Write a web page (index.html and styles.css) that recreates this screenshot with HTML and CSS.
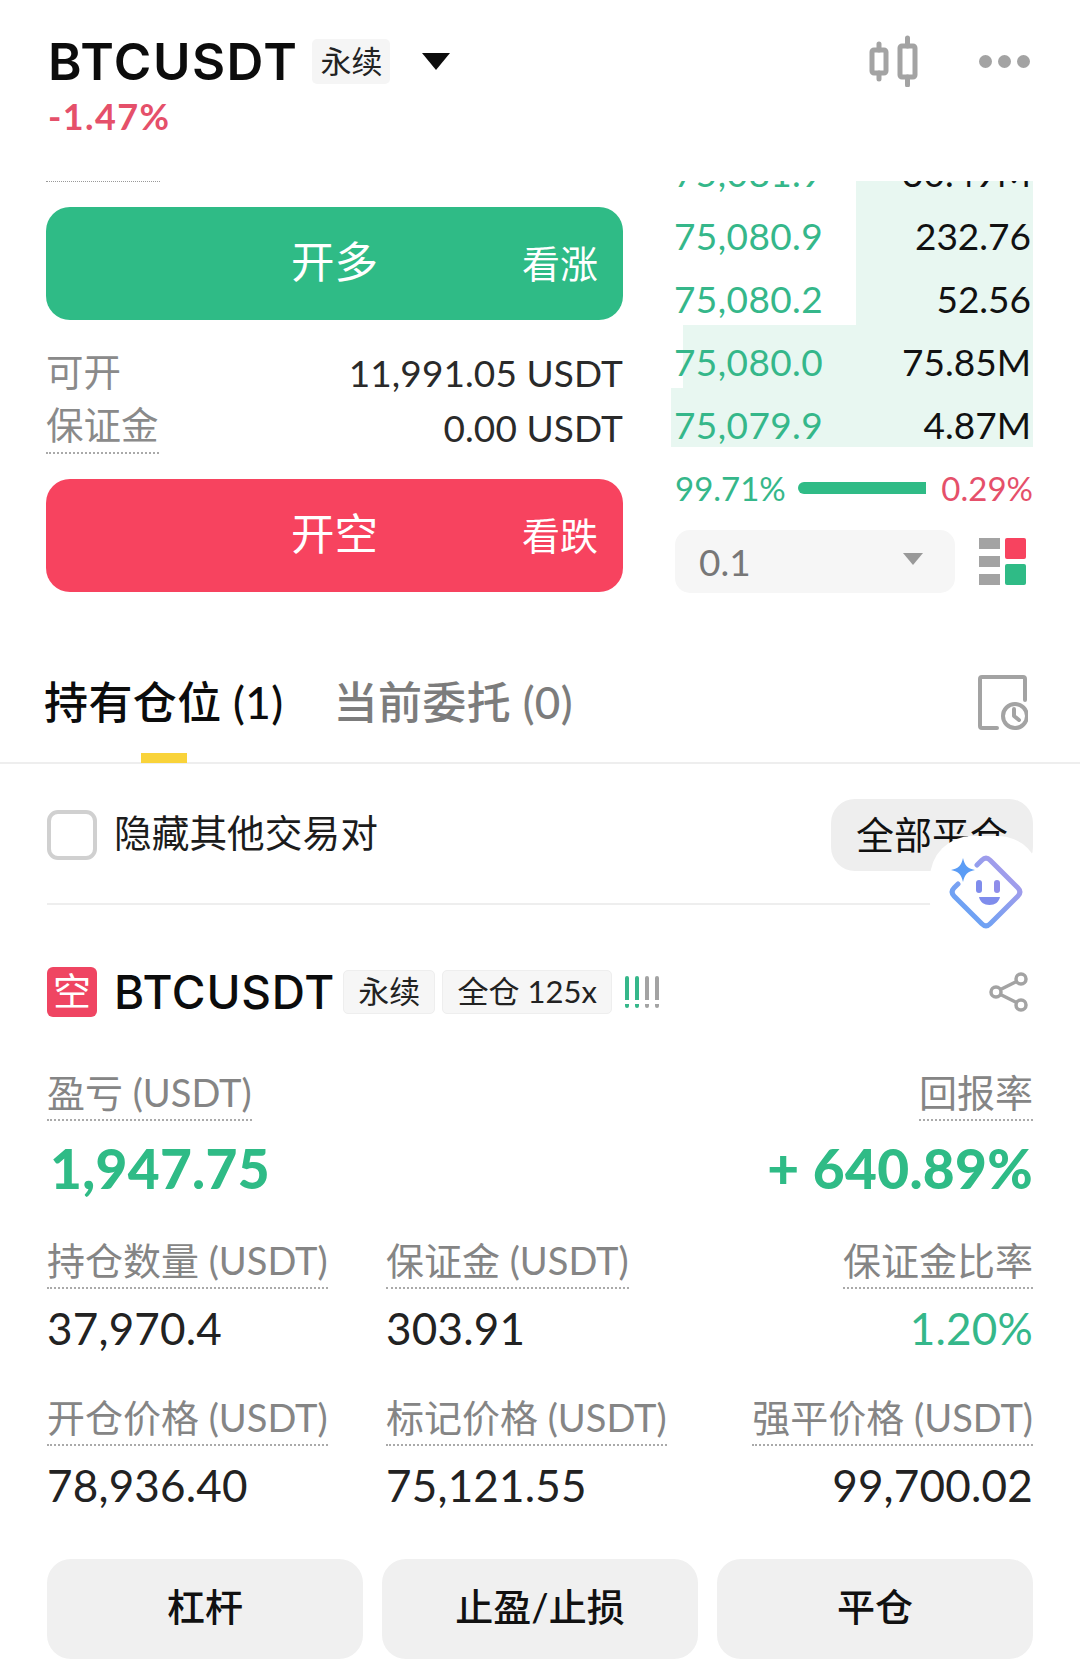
FILE: index.html
```html
<!DOCTYPE html>
<html lang="zh-CN">
<head>
    <meta charset="UTF-8">
    <meta name="viewport" content="width=device-width, initial-scale=1.0">
    <title>BTCUSDT</title>
    <link rel="stylesheet" href="styles.css">
</head>
<body>
    <header class="topbar">
        <div class="topbar-row">
            <h1 class="symbol">BTCUSDT</h1>
            <span class="tag-perp">永续</span>
            <span class="caret"></span>
            <svg class="icon-candles" viewBox="0 0 50 52" fill="none" stroke="#a3a3a3" stroke-width="5" stroke-linecap="round">
                <rect x="3" y="15" width="14" height="23" rx="2"/>
                <path d="M10 9v6M10 38v6"/>
                <rect x="31" y="11" width="15" height="31" rx="2"/>
                <path d="M38.500 3v8M38.500 42v8"/>
            </svg>
            <div class="dots"><i></i><i></i><i></i></div>
        </div>
        <div class="change">-1.47%</div>
    </header>

    <section class="trade">
        <div class="trade-form">
            <div class="dotted-stub"></div>
            <button class="big-btn long"><span class="big-main">开多</span><span class="big-side">看涨</span></button>
            <div class="balance balance-first"><span class="balance-label">可开</span><span class="balance-value">11,991.05 USDT</span></div>
            <div class="balance"><span class="balance-label dashed">保证金</span><span class="balance-value balance-value-low">0.00 USDT</span></div>
            <button class="big-btn short"><span class="big-main">开空</span><span class="big-side">看跌</span></button>
        </div>
        <div class="book">
            <div class="book-rows">
                <div class="book-row"><span class="depth" style="width:177px"></span><span class="price">75,081.9</span><span class="qty">30.49M</span></div>
                <div class="book-row"><span class="depth" style="width:177px"></span><span class="price">75,080.9</span><span class="qty">232.76</span></div>
                <div class="book-row"><span class="depth" style="width:177px"></span><span class="price">75,080.2</span><span class="qty">52.56</span></div>
                <div class="book-row"><span class="depth" style="width:350px"></span><span class="price">75,080.0</span><span class="qty">75.85M</span></div>
                <div class="book-row"><span class="depth" style="width:362px"></span><span class="price">75,079.9</span><span class="qty">4.87M</span></div>
            </div>
            <div class="ratio">
                <span class="ratio-buy">99.71%</span>
                <span class="ratio-bar"></span>
                <span class="ratio-sell">0.29%</span>
            </div>
            <div class="book-tools">
                <div class="step-select"><span>0.1</span><span class="step-caret"></span></div>
                <div class="layout-icon">
                    <div class="layout-bars"><i></i><i></i><i></i></div>
                    <div class="layout-squares"><i class="sq-red"></i><i class="sq-green"></i></div>
                </div>
            </div>
        </div>
    </section>

    <nav class="tabs">
        <a class="tab active">持有仓位 (1)</a>
        <a class="tab">当前委托 (0)</a>
        <svg class="icon-history" viewBox="0 0 50 56" fill="none" stroke="#a3a3a3" stroke-width="4" stroke-linecap="round" stroke-linejoin="round">
            <path d="M19 53H4a2 2 0 0 1-2-2V4a2 2 0 0 1 2-2h41a2 2 0 0 1 2 2v21"/>
            <circle cx="37" cy="41" r="12"/>
            <path d="M36 34v7l5 4"/>
        </svg>
    </nav>

    <div class="filter">
        <div class="filter-inner">
            <span class="checkbox"></span>
            <span class="filter-text">隐藏其他交易对</span>
            <button class="close-all">全部平仓</button>
        </div>
        <div class="assistant">
            <svg viewBox="0 0 76 76" fill="none">
                <defs>
                    <linearGradient id="ai" x1="0" y1="1" x2="1" y2="0">
                        <stop offset="0" stop-color="#5aa4f7"/>
                        <stop offset="1" stop-color="#b49ae8"/>
                    </linearGradient>
                </defs>
                <path d="M29 12L33.800 7.200Q38 3 42.200 7.200L69.800 34.800Q74 39 69.800 43.200L42.200 70.800Q38 75 33.800 70.800L6.200 43.200Q2 39 6.200 34.800L10 31" stroke="url(#ai)" stroke-width="5" stroke-linecap="round"/>
                <path d="M15 5c2 8 4 10 12 12-8 2-10 4-12 12-2-8-4-10-12-12 8-2 10-4 12-12z" fill="#5a9cf5"/>
                <rect x="28" y="27" width="6" height="13" rx="3" fill="#7f8cec"/>
                <rect x="46" y="27" width="6" height="13" rx="3" fill="#8f8dea"/>
                <path d="M31 44h21c-1 5-5 8-10.500 8S32 49 31 44z" fill="#7f8cec"/>
            </svg>
        </div>
    </div>

    <section class="position">
        <div class="pos-title">
            <span class="side-badge">空</span>
            <span class="pos-symbol">BTCUSDT</span>
            <span class="pos-tag">永续</span>
            <span class="pos-tag pos-tag-wide">全仓 125x</span>
            <div class="risk"><i class="on"></i><i class="on"></i><i></i><i></i></div>
            <svg class="icon-share" viewBox="0 0 40 40" fill="none" stroke="#a3a3a3" stroke-width="3.500">
                <circle cx="7" cy="20" r="5"/>
                <circle cx="32" cy="7" r="5"/>
                <circle cx="32" cy="33" r="5"/>
                <path d="M11.500 17.500 27.500 9.500M11.500 22.500l16 8"/>
            </svg>
        </div>

        <div class="pnl-row">
            <div class="metric">
                <span class="metric-label">盈亏 (USDT)</span>
                <div class="pnl-value">1,947.75</div>
            </div>
            <div class="metric metric-end">
                <span class="metric-label">回报率</span>
                <div class="pnl-value">+ 640.89%</div>
            </div>
        </div>

        <div class="metric-grid">
            <div class="metric">
                <span class="metric-label">持仓数量 (USDT)</span>
                <div class="metric-value">37,970.4</div>
            </div>
            <div class="metric">
                <span class="metric-label">保证金 (USDT)</span>
                <div class="metric-value">303.91</div>
            </div>
            <div class="metric metric-end">
                <span class="metric-label">保证金比率</span>
                <div class="metric-value green">1.20%</div>
            </div>
            <div class="metric">
                <span class="metric-label">开仓价格 (USDT)</span>
                <div class="metric-value">78,936.40</div>
            </div>
            <div class="metric">
                <span class="metric-label">标记价格 (USDT)</span>
                <div class="metric-value">75,121.55</div>
            </div>
            <div class="metric metric-end">
                <span class="metric-label">强平价格 (USDT)</span>
                <div class="metric-value">99,700.02</div>
            </div>
        </div>

        <div class="actions">
            <button class="action">杠杆</button>
            <button class="action">止盈/止损</button>
            <button class="action">平仓</button>
        </div>
    </section>
</body>
</html>
```

FILE: styles.css
```css
* {
    box-sizing: border-box;
}
body {
    margin: 0;
    width: 1080px;
    background: #fff;
    color: #1c1c1c;
    font-family: Lato, "Noto Sans CJK SC", sans-serif;
    overflow-x: hidden;
}
button {
    border: 0;
    font-family: inherit;
    padding: 0;
}

/* top bar */
.topbar {
    height: 181px;
    padding: 35px 47px 0 48px;
}
.topbar-row {
    display: flex;
    align-items: center;
    height: 52px;
}
.symbol {
    margin: 0;
    font-family: Inter, sans-serif;
    font-size: 51px;
    font-weight: 600;
    letter-spacing: 1.5px;
    color: #0c0c0c;
}
.tag-perp {
    margin-left: 14px;
    width: 78px;
    height: 45px;
    background: #f5f5f5;
    border-radius: 5px;
    font-size: 31px;
    line-height: 44px;
    text-align: center;
    color: #222;
}
.caret {
    margin-left: 32px;
    border-left: 14px solid transparent;
    border-right: 14px solid transparent;
    border-top: 17px solid #0c0c0c;
}
.icon-candles {
    margin-left: auto;
    width: 50px;
    height: 52px;
}
.dots {
    display: flex;
    gap: 6px;
    margin-left: 60px;
    margin-right: 3px;
}
.dots i {
    width: 13px;
    height: 13px;
    border-radius: 50%;
    background: #a3a3a3;
}
.change {
    margin-top: 8px;
    font-size: 36px;
    font-weight: 700;
    line-height: 42px;
    letter-spacing: 1.4px;
    color: #e5506a;
}

/* trade area */
.trade {
    display: grid;
    grid-template-columns: 577px 358px;
    column-gap: 52px;
    height: 489px;
    padding-left: 46px;
}
.dotted-stub {
    width: 114px;
    border-top: 1px dotted #999;
}
.big-btn {
    display: flex;
    align-items: center;
    width: 577px;
    height: 113px;
    border-radius: 24px;
    color: #fff;
}
.long {
    margin-top: 25px;
    background: #2fbb86;
}
.short {
    margin-top: 29px;
    background: #f7435f;
}
.big-main {
    margin-left: 245px;
    margin-bottom: 9px;
    font-size: 43.500px;
}
.big-side {
    margin-left: auto;
    margin-right: 25px;
    margin-bottom: 4px;
    font-size: 38px;
}
.balance {
    display: flex;
    justify-content: space-between;
    align-items: center;
    height: 52px;
    font-size: 37.500px;
    color: #8a8a8a;
}
.balance-first {
    margin-top: 26px;
}
.balance-label {
    line-height: 50px;
}
.balance-label.dashed {
    height: 56px;
    margin-top: 4px;
    line-height: 54px;
    border-bottom: 2px dotted #aaa;
}
.balance-value {
    font-size: 37px;
    letter-spacing: 0.1px;
    color: #2a2a2a;
}
.balance-value-low {
    margin-top: 6px;
}

/* order book */
.book {
    width: 358px;
}
.book-rows {
    height: 266px;
    margin-left: -4px;
    padding-left: 3px;
    overflow: hidden;
}
.book-row {
    display: flex;
    justify-content: space-between;
    position: relative;
    height: 63px;
    padding: 5px 2px 0 0;
    font-size: 37px;
    line-height: 63px;
}
.book-row:first-child {
    margin-top: -45px;
}
.depth {
    position: absolute;
    top: 0;
    right: 0;
    bottom: 0;
    background: #e8f7f1;
}
.price,
.qty {
    position: relative;
}
.price {
    letter-spacing: 0.4px;
    color: #35b78a;
}
.qty {
    color: #111;
}
.ratio {
    display: flex;
    align-items: center;
    height: 40px;
    margin-top: 21px;
    font-size: 33px;
}
.ratio-buy {
    width: 123px;
    color: #35b78a;
}
.ratio-bar {
    width: 128px;
    height: 12px;
    background: #2fbb86;
    border-radius: 6px 0 0 6px;
}
.ratio-sell {
    margin-left: auto;
    color: #e5506a;
}
.book-tools {
    display: flex;
    justify-content: space-between;
    margin-top: 22px;
}
.step-select {
    display: flex;
    align-items: center;
    justify-content: space-between;
    width: 280px;
    height: 63px;
    padding: 0 32px 0 24px;
    background: #f6f6f6;
    border-radius: 15px;
    font-size: 37px;
    color: #777;
}
.step-caret {
    border-left: 10px solid transparent;
    border-right: 10px solid transparent;
    border-top: 12px solid #999;
    margin-top: -5px;
}
.layout-icon {
    display: flex;
    gap: 5px;
    margin: 8px 7px 0 0;
}
.layout-bars {
    display: flex;
    flex-direction: column;
    gap: 7px;
}
.layout-bars i {
    width: 21px;
    height: 11px;
    background: #a3a3a3;
}
.layout-squares {
    display: flex;
    flex-direction: column;
    gap: 5px;
}
.layout-squares i {
    width: 21px;
    height: 21px;
    border-radius: 2px;
}
.sq-red {
    background: #f7435f;
}
.sq-green {
    background: #2fbb86;
}

/* tabs */
.tabs {
    display: flex;
    align-items: flex-start;
    gap: 50px;
    height: 94px;
    padding: 2px 52px 0 44px;
    border-bottom: 2px solid #eee;
}
.tab {
    position: relative;
    font-size: 44px;
    font-weight: 500;
    line-height: 60px;
    letter-spacing: 0.4px;
    color: #7c7c7c;
}
.tab.active {
    color: #0c0c0c;
}
.tab.active::after {
    content: "";
    position: absolute;
    left: 97px;
    top: 81px;
    width: 46px;
    height: 10px;
    background: #f9d33a;
}
.icon-history {
    margin: 3px 0 0 auto;
    width: 50px;
    height: 56px;
}

/* filter */
.filter {
    position: relative;
    padding: 0 47px;
}
.filter-inner {
    display: flex;
    align-items: center;
    height: 141px;
    padding-top: 2px;
    border-bottom: 2px solid #eee;
}
.checkbox {
    width: 50px;
    height: 50px;
    border: 4px solid #d0d0d0;
    border-radius: 11px;
}
.filter-text {
    margin-left: 17px;
    margin-bottom: 8px;
    font-size: 37.700px;
    color: #1c1c1c;
}
.close-all {
    margin-left: auto;
    width: 202px;
    height: 72px;
    padding-bottom: 5px;
    background: #eee;
    border-radius: 24px;
    font-size: 38px;
    color: #111;
}
.assistant {
    position: absolute;
    top: 72px;
    right: 40px;
    width: 110px;
    height: 110px;
    padding: 17px 0 0 18px;
    background: #fff;
    border-radius: 42px;
}
.assistant svg {
    display: block;
    width: 76px;
    height: 76px;
}

/* position card */
.position {
    padding: 62px 47px 0;
}
.pos-title {
    display: flex;
    align-items: center;
    height: 50px;
}
.side-badge {
    width: 50px;
    height: 50px;
    background: #ef4562;
    border-radius: 6px;
    font-size: 38px;
    line-height: 46px;
    text-align: center;
    color: #fff;
}
.pos-symbol {
    margin-left: 17px;
    font-family: Inter, sans-serif;
    font-size: 46px;
    font-weight: 500;
    letter-spacing: 0.8px;
    color: #0c0c0c;
}
.pos-tag {
    width: 92px;
    height: 44px;
    margin-left: 8px;
    background: #f6f6f6;
    border: 1px solid #eee;
    border-radius: 5px;
    font-size: 31px;
    line-height: 40px;
    text-align: center;
    color: #222;
}
.pos-tag-wide {
    width: 170px;
    margin-left: 7px;
}
.risk {
    display: flex;
    gap: 6px;
    margin-left: 13px;
}
.risk i {
    width: 4px;
    height: 32px;
    background: linear-gradient(#a3a3a3 0 24px, transparent 24px 28px, #a3a3a3 28px);
    border-radius: 2px;
}
.risk i.on {
    background: linear-gradient(#35b78a 0 24px, transparent 24px 28px, #35b78a 28px);
}
.icon-share {
    margin-left: auto;
    margin-right: 4px;
    width: 40px;
    height: 40px;
}
.pnl-row {
    display: flex;
    justify-content: space-between;
    margin-top: 53px;
}
.metric-end {
    text-align: right;
}
.metric-label {
    display: inline-block;
    height: 51px;
    line-height: 44px;
    border-bottom: 2px dotted #aaa;
    font-size: 38px;
    color: #858585;
}
.pnl-value {
    margin-top: 17px;
    padding-left: 3px;
    font-size: 55px;
    font-weight: 900;
    line-height: 60px;
    letter-spacing: 0.3px;
    color: #2fbb86;
}
.metric-grid {
    display: grid;
    grid-template-columns: 339px 1fr 1fr;
    row-gap: 37px;
    margin-top: 40px;
}
.metric-value {
    margin-top: 9px;
    font-size: 44px;
    line-height: 60px;
    letter-spacing: 0.2px;
    color: #222;
}
.metric-value.green {
    color: #35b78a;
}
.actions {
    display: grid;
    grid-template-columns: repeat(3, 316px);
    column-gap: 19px;
    margin-top: 44px;
}
.action {
    height: 100px;
    padding-bottom: 10px;
    background: #f0f0f0;
    border-radius: 24px;
    font-size: 38px;
    font-weight: 500;
    color: #111;
}
```
